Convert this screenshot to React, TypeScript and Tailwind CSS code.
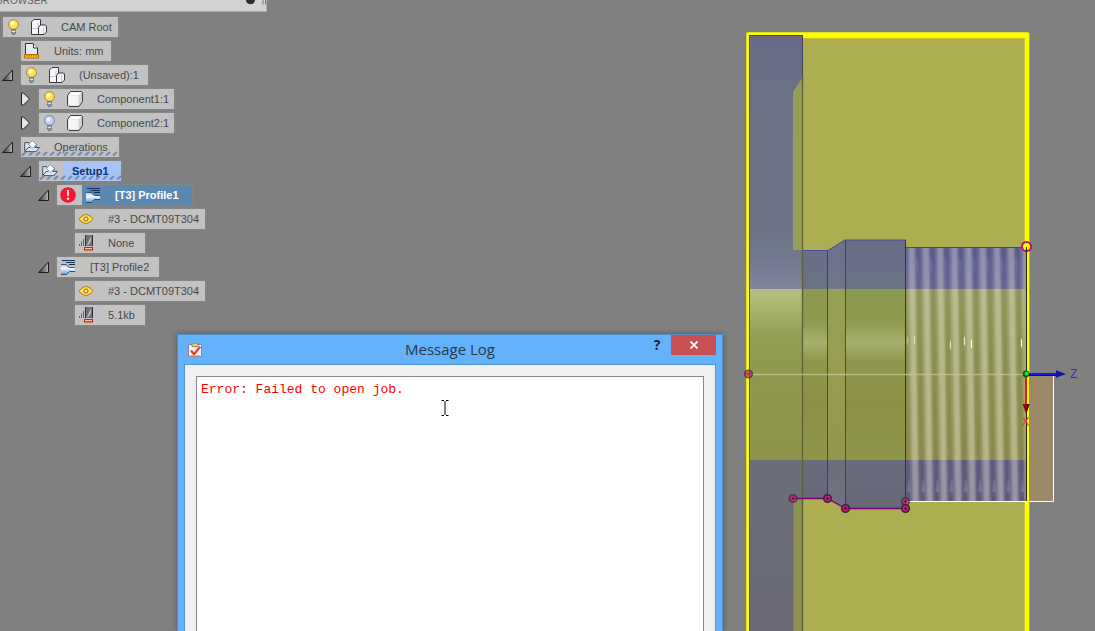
import { ReactNode } from "react";

function Bulb({ on = true }: { on?: boolean }) {
  return (
    <svg viewBox="0 0 16 16" className="w-4 h-4 shrink-0">
      <circle
        cx="7.500"
        cy="5.500"
        r="4.900"
        fill={on ? "#ffe24a" : "#bcd0fa"}
        stroke={on ? "#a8842c" : "#74839f"}
      />
      <circle cx="6.500" cy="4.500" r="2.200" fill={on ? "#fffbc4" : "#edf4ff"} />
      <path d="M5.500 10.500h4v3.500l-1 1.500h-2l-1-1.500z" fill="#8f98b0" stroke="#5a6276" strokeWidth="0.800" />
      <path d="M5.500 12.300h4" stroke="#e6e9f2" />
    </svg>
  );
}

function Assembly() {
  return (
    <svg viewBox="0 0 16 16" className="w-4 h-4 shrink-0">
      <path d="M.5 3 3 .5h6.500V6L8 15.500H.5z" fill="#f4f6f8" stroke="#33383f" strokeLinejoin="round" />
      <path d="M1 3.500h5.500L9 1" fill="none" stroke="#fff" />
      <path d="M7 3.500V9M1 9.500h6" fill="none" stroke="#c4c9cf" />
      <path d="M7.500 8.500 9.500 6h5l1 1v6l-2.500 2.500H7.500z" fill="#f4f6f8" stroke="#33383f" strokeLinejoin="round" />
      <path d="M12.500 15V9L15 6.500" fill="none" stroke="#c4c9cf" />
    </svg>
  );
}

function Cube() {
  return (
    <svg viewBox="0 0 16 16" className="w-4 h-4 shrink-0">
      <path
        d="M.5 4.500 3.500.5h11l1 1v9l-3.500 5h-10L.5 14z"
        fill="#cfd2d6"
        stroke="#3c4148"
        strokeLinejoin="round"
      />
      <path d="M1.200 5h10.300v9.800H2.200l-1-1z" fill="#f3f4f6" />
      <path d="M1.600 4.400 3.800 1.200h10.400l-2.700 3.200z" fill="#fff" />
    </svg>
  );
}

function Units() {
  return (
    <svg viewBox="0 0 16 16" className="w-4 h-4 shrink-0">
      <path d="M1.500 11.500V.5H9l4.500 4.500v6.500" fill="#e9edf4" stroke="#22304a" />
      <path d="M9.500.8V5H13.500" fill="#fff" stroke="#22304a" />
      <path d="M.5 11.500h14v3.500H.5z" fill="#ffc52e" stroke="#b36b00" />
      <path d="M3 12v1.600M5.300 12v1.600M7.600 12v1.600M9.900 12v1.600M12.200 12v1.600" stroke="#8c5200" strokeWidth="0.800" />
    </svg>
  );
}

function Folder() {
  return (
    <svg viewBox="0 0 16 16" className="w-4 h-4 shrink-0">
      <path d="M.7 12.400V3.600h3.800l1 1.600h6.500v7.200" fill="#dfe4ea" stroke="#4a525e" />
      <path d="m8.200 1.400 4.200 4-3.800 4-4.200-4z" fill="#fff" stroke="#6f94c0" />
      <path d="M.8 12.600 4.200 8.500h11.200l-3.600 4.100z" fill="#dde4ec" stroke="#4a525e" strokeLinejoin="round" />
      <path d="m5.500 8 3 2.400 2.700-2.400z" fill="#a9cdf0" />
    </svg>
  );
}

function ErrorMark() {
  return (
    <svg viewBox="0 0 16 16" className="w-4 h-4 shrink-0">
      <circle cx="8" cy="8" r="7.800" fill="#fb1330" />
      <path d="M6.900 3h2.200l-.4 6.200H7.300z" fill="#fff" />
      <circle cx="8" cy="11.800" r="1.200" fill="#fff" />
    </svg>
  );
}

function ProfileIcon() {
  return (
    <svg viewBox="0 0 16 16" className="w-4 h-4 shrink-0">
      <defs>
        <linearGradient id="turned" x1="0" y1="0" x2="0" y2="1">
          <stop offset="0" stopColor="#a9d3fa" />
          <stop offset="0.400" stopColor="#f2f9ff" />
          <stop offset="1" stopColor="#4f9be0" />
        </linearGradient>
      </defs>
      <path d="M2 1.500h13M6 3.500h9M9 5.500h6" stroke="#13305c" />
      <path d="M1 5.500h5l3.500 3H15v4H9.500l-3 3H1z" fill="url(#turned)" />
      <path d="M15 8.500H9.500L6 5.500H1M15 12.500H9.500l-3 3H1" fill="none" stroke="#24374f" strokeWidth="0.800" />
    </svg>
  );
}

function Insert() {
  return (
    <svg viewBox="0 0 16 16" className="w-4 h-4 shrink-0">
      <path
        d="M.7 8 4 5l3.200-1.600h1.600L12 5l3.300 3L12 11l-3.200 1.600H7.200L4 11z"
        fill="#ffdc4a"
        stroke="#b07c12"
        strokeLinejoin="round"
      />
      <circle cx="8" cy="8" r="2" fill="#fff2a6" stroke="#8c6414" />
    </svg>
  );
}

function Stats() {
  return (
    <svg viewBox="0 0 16 16" className="w-4 h-4 shrink-0">
      <path d="M1.500 11V9M3.500 11V6.500M5.500 11V4" stroke="#5d6268" />
      <path d="M7 0h8v11H7z" fill="#6c7278" />
      <path d="M7.500 0v11M14.500 0v11" stroke="#2c3136" />
      <path d="M9.500 8.500 13 1.500V6l-3.500 5z" fill="#b9c0c6" />
      <path d="M6 12h9v3.500H6z" fill="#c0260e" />
      <path d="M7 13.700h7" stroke="#fff0c8" />
    </svg>
  );
}

function Toggle({ open, label }: { open: boolean; label: string }) {
  return (
    <button type="button" aria-label={label} className="w-[18px] h-5 shrink-0">
      <svg viewBox="0 0 18 20" className="w-[18px] h-5 overflow-visible">
        <defs>
          <linearGradient id="corner" x1="0" y1="0" x2="1" y2="0">
            <stop offset="0.200" stopColor="#4a4a4a" />
            <stop offset="1" stopColor="#b4b4b4" />
          </linearGradient>
        </defs>
        {open ? (
          <path d="M-.5 15.500 9.500 5v10.500z" fill="url(#corner)" stroke="#1c1c1c" strokeLinejoin="round" />
        ) : (
          <path d="M.5 4h2L8.500 10l-6 6h-2z" fill="#e4e4e4" stroke="#1c1c1c" strokeLinejoin="round" />
        )}
      </svg>
    </button>
  );
}

// diagonal ticks drawn under the rows that still need regenerating
function Hatch() {
  return (
    <svg className="absolute left-0 bottom-px w-full h-[5px]">
      <defs>
        <pattern id="hatch" width="7" height="5" patternUnits="userSpaceOnUse">
          <path d="m1 4.500 4-3.500" stroke="#7289b4" strokeWidth="2" />
        </pattern>
      </defs>
      <rect width="100%" height="5" fill="url(#hatch)" />
    </svg>
  );
}

type Row = {
  label: string;
  indent: string;
  width: string;
  icons: ReactNode[];
  open?: boolean;
  state?: "setup" | "active";
  hatch?: boolean;
};

const rows: Row[] = [
  { label: "CAM Root", indent: "pl-[3px]", width: "w-[115px]", icons: [<Bulb />, <Assembly />] },
  { label: "Units: mm", indent: "pl-[21px]", width: "w-[90px]", icons: [<Units />] },
  { label: "(Unsaved):1", indent: "pl-[3px]", width: "w-[127px]", icons: [<Bulb />, <Assembly />], open: true },
  { label: "Component1:1", indent: "pl-[21px]", width: "w-[135px]", icons: [<Bulb />, <Cube />], open: false },
  { label: "Component2:1", indent: "pl-[21px]", width: "w-[135px]", icons: [<Bulb on={false} />, <Cube />], open: false },
  { label: "Operations", indent: "pl-[3px]", width: "w-[98px]", icons: [<Folder />], open: true, hatch: true },
  { label: "Setup1", indent: "pl-[21px]", width: "w-[82px]", icons: [<Folder />], open: true, state: "setup", hatch: true },
  { label: "[T3] Profile1", indent: "pl-[39px]", width: "w-[135px]", icons: [<ErrorMark />, <ProfileIcon />], open: true, state: "active" },
  { label: "#3 - DCMT09T304", indent: "pl-[75px]", width: "w-[130px]", icons: [<Insert />] },
  { label: "None", indent: "pl-[75px]", width: "w-[70px]", icons: [<Stats />] },
  { label: "[T3] Profile2", indent: "pl-[39px]", width: "w-[102px]", icons: [<ProfileIcon />], open: true },
  { label: "#3 - DCMT09T304", indent: "pl-[75px]", width: "w-[130px]", icons: [<Insert />] },
  { label: "5.1kb", indent: "pl-[75px]", width: "w-[70px]", icons: [<Stats />] },
];

const fills = {
  plain: "bg-[#c2c2c2] text-[#484848]",
  setup: "bg-[linear-gradient(to_right,#c2c2c2_24px,#a6c5f4_24px)] text-[#0a2f7c] font-bold",
  active: "bg-[linear-gradient(to_right,#c2c2c2_25px,#5b88b0_25px)] text-white font-bold",
};

function TreeRow({ label, indent, width, icons, open, state, hatch }: Row) {
  return (
    <li className={`flex h-5 ${indent}`}>
      {open !== undefined && <Toggle open={open} label={`Toggle ${label}`} />}
      <div
        className={`relative flex items-center h-5 pl-[3px] shadow-[0_0_3px_#8f8f8f] ${width} ${fills[state ?? "plain"]}`}
      >
        <div className="flex gap-[9px] mr-3.5">
          {icons.map((icon, i) => (
            <span key={i}>{icon}</span>
          ))}
        </div>
        <span className="whitespace-nowrap">{label}</span>
        {hatch && <Hatch />}
      </div>
    </li>
  );
}

function Browser() {
  return (
    <aside className="w-[267px] shrink-0 text-[11px] leading-4">
      <header className="flex items-end justify-between h-3 overflow-hidden bg-[#d2d2d2] border-b border-r border-[#aaa] text-[#5f6266]">
        <h2 className="-ml-1 mb-0.5 text-[10px] leading-4">BROWSER</h2>
        <svg viewBox="0 0 20 11" className="w-5 h-[11px]">
          <circle cx="4.500" cy="-.3" r="4.600" fill="#2e2e2e" />
          <path d="M17 0v4.500M19.500 0v4.500" stroke="#777" />
        </svg>
      </header>
      <ul className="flex flex-col gap-1 pt-[5px]">
        {rows.map((row, i) => (
          <TreeRow key={i} {...row} />
        ))}
      </ul>
    </aside>
  );
}

const points = [
  { x: 748.5, y: 374, faded: true },
  { x: 793, y: 498.5, faded: true },
  { x: 827.5, y: 498.5 },
  { x: 845.5, y: 508.5 },
  { x: 905.5, y: 501.5, faded: true },
  { x: 905.5, y: 508.5 },
];

const glints = [
  { x: 907.5, y: 341, opacity: 0.35 },
  { x: 914.5, y: 340, opacity: 0.5 },
  { x: 950.5, y: 345, opacity: 0.7 },
  { x: 964.5, y: 341, opacity: 0.8 },
  { x: 971.5, y: 344, opacity: 1 },
  { x: 1021.5, y: 343, opacity: 1 },
];

function Viewport() {
  return (
    <svg viewBox="740 0 355 631" className="w-[355px] h-[631px] shrink-0" role="img" aria-label="Turned part">
      <defs>
        <linearGradient id="disk" gradientUnits="userSpaceOnUse" x1="0" y1="35" x2="0" y2="631">
          <stop offset="0" stopColor="#696b86" />
          <stop offset="0.100" stopColor="#6b7285" />
          <stop offset="0.330" stopColor="#6b7384" />
          <stop offset="0.380" stopColor="#727990" />
          <stop offset="0.426" stopColor="#8284a0" />
          <stop offset="0.426" stopColor="#b6bf80" />
          <stop offset="0.455" stopColor="#acb671" />
          <stop offset="0.500" stopColor="#939f55" />
          <stop offset="0.570" stopColor="#8f994d" />
          <stop offset="0.713" stopColor="#8f944a" />
          <stop offset="0.713" stopColor="#6c6e7a" />
          <stop offset="1" stopColor="#6a6b76" />
        </linearGradient>
        <linearGradient id="shaft" gradientUnits="userSpaceOnUse" x1="0" y1="240" x2="0" y2="509">
          <stop offset="0" stopColor="#6a6d88" />
          <stop offset="0.182" stopColor="#697483" />
          <stop offset="0.182" stopColor="#8c9a4e" />
          <stop offset="0.310" stopColor="#8f9b50" />
          <stop offset="0.380" stopColor="#a7b06e" />
          <stop offset="0.450" stopColor="#8f984d" />
          <stop offset="0.600" stopColor="#8c9045" />
          <stop offset="0.818" stopColor="#8e9648" />
          <stop offset="0.818" stopColor="#6a6b7b" />
          <stop offset="1" stopColor="#666878" />
        </linearGradient>
        <linearGradient id="cone" gradientUnits="userSpaceOnUse" x1="0" y1="240" x2="0" y2="509">
          <stop offset="0" stopColor="#6e7089" />
          <stop offset="0.182" stopColor="#707789" />
          <stop offset="0.182" stopColor="#96a156" />
          <stop offset="0.500" stopColor="#989c50" />
          <stop offset="0.818" stopColor="#92974b" />
          <stop offset="0.818" stopColor="#6d6d7b" />
          <stop offset="1" stopColor="#727280" />
        </linearGradient>
        <linearGradient id="thread" gradientUnits="userSpaceOnUse" x1="0" y1="247" x2="0" y2="501">
          <stop offset="0" stopColor="#5a5a82" />
          <stop offset="0.165" stopColor="#66668c" />
          <stop offset="0.165" stopColor="#858b57" />
          <stop offset="0.500" stopColor="#7f824c" />
          <stop offset="0.838" stopColor="#807c46" />
          <stop offset="0.838" stopColor="#5e5975" />
          <stop offset="1" stopColor="#5d5873" />
        </linearGradient>
        <linearGradient
          id="ridges"
          gradientUnits="userSpaceOnUse"
          x1="904.600"
          y1="247"
          x2="918.800"
          y2="247"
          spreadMethod="repeat"
          gradientTransform="rotate(-0.900 905 247)"
        >
          <stop offset="0" stopColor="#fffff0" stopOpacity="0" />
          <stop offset="0.200" stopColor="#fffff0" stopOpacity="0.160" />
          <stop offset="0.340" stopColor="#fffff0" stopOpacity="0.360" />
          <stop offset="0.500" stopColor="#fffff0" stopOpacity="0.440" />
          <stop offset="0.660" stopColor="#fffff0" stopOpacity="0.360" />
          <stop offset="0.800" stopColor="#fffff0" stopOpacity="0.080" />
          <stop offset="1" stopColor="#fffff0" stopOpacity="0" />
        </linearGradient>
        <pattern id="runoutTop" x="906" y="247" width="14.200" height="42" patternUnits="userSpaceOnUse">
          <path d="m8 13 3-2 2 5-1.500 10z" fill="#9a9ac6" opacity="0.150" />
        </pattern>
        <pattern id="runoutBottom" x="906" y="460" width="14.200" height="41" patternUnits="userSpaceOnUse">
          <path d="m1 31 2-14 2 14-2 2z" fill="#a09cc0" opacity="0.350" />
        </pattern>
      </defs>

      {/* stock */}
      <path d="M746 631V34q0-2 2-2h279q2.500 0 2.500 2v597z" fill="#dede20" />
      <path d="M747 631V33h282v598z" fill="#ff0" />
      <path d="M803 38h221v593H803z" fill="#adad52" />
      <path d="M802 38.500h222M1024.500 38v593" stroke="#c6c632" fill="none" />

      {/* flange */}
      <path d="M749 35h54v596h-54z" fill="url(#disk)" />
      <path d="m793 92 10-15v173h-10z" fill="#95a055" />
      <path d="M793 498h10v133h-10z" fill="#8a944c" />
      <path d="M749.500 35v596" stroke="#55583f" />
      <path d="M749 35.500h54M802.500 35v43" stroke="#414264" fill="none" />

      {/* shaft */}
      <path d="M803 250h25v248h-25zM845 240h61v268h-61z" fill="url(#shaft)" />
      <path d="m828 250 17-10v268l-17-10z" fill="url(#cone)" />
      <path d="M802.500 78v553" stroke="#5f6238" strokeWidth="1.400" />
      <path d="M827.500 250v248M845.500 240v268" stroke="#3a3a30" opacity="0.800" />
      <path d="M803 250.500h25l17-10.500h61" fill="none" stroke="#4a4ba0" />

      {/* thread */}
      <path d="M906 247h120v254H906z" fill="url(#thread)" />
      <path d="M906 247h120v254H906z" fill="url(#ridges)" />
      <path d="M906 289h120v171H906z" fill="#c8c860" opacity="0.120" />
      <path d="M906 247h120v42H906z" fill="#5050a0" opacity="0.180" />
      <path d="M906 460h120v41H906z" fill="#5050a0" opacity="0.100" />
      <path d="M906 247h120v42H906z" fill="url(#runoutTop)" />
      <path d="M906 460h120v41H906z" fill="url(#runoutBottom)" />
      {glints.map(({ x, y, opacity }) => (
        <ellipse key={x} cx={x} cy={y} rx="0.700" ry="4.500" fill="#ffffd8" opacity={opacity} />
      ))}
      <path d="M906 247.500h120" stroke="#4344a6" />
      <path d="M905.500 240v268" stroke="#36362c" />

      <path d="M749 374.500h277" stroke="#c9c99a" strokeWidth="1.500" opacity="0.700" />

      {/* machining area */}
      <path d="M1029 375h24v126h-24z" fill="#9c8967" />
      <path d="M1024 247h2v254h-2z" fill="#a0a060" opacity="0.400" />
      <path d="M908 501.500h145.500V375" fill="none" stroke="#fff" />
      <path d="M1026.500 247v254" stroke="#222" />

      <path d="M793 498.500V631" stroke="#8c5c7c" />
      <path d="M793 498.500h34.500l18 10h60" fill="none" stroke="#780078" strokeWidth="1.300" />
      {points.map(({ x, y, faded }) => (
        <g key={`${x}-${y}`} opacity={faded ? 0.7 : 1}>
          <circle cx={x} cy={y} r="3.800" fill="#c8187e" stroke="#3c2438" strokeWidth="1.600" />
          <circle cx={x} cy={y} r="1.200" fill="#3a0a28" />
        </g>
      ))}
      <circle cx="1026.500" cy="246.500" r="4.500" fill="#ff0" stroke="#c01070" strokeWidth="2" />
      <path d="M1026.500 247v5" stroke="#222" />

      {/* axes */}
      <path d="M1026 374v31" stroke="#f01414" strokeWidth="2" />
      <path d="M1022.500 404h7l-3.500 9.500z" fill="#8c0c0c" />
      <path d="M1027 404h2.500l-2.500 8z" fill="#3a0808" />
      <path d="M1028 374h29" stroke="#1616e0" strokeWidth="2" />
      <path d="M1028 375.500h29" stroke="#0c0c60" />
      <path d="M1056 370.300v7.400l10-3.700z" fill="#14149c" />
      <circle cx="1026" cy="374" r="3.400" fill="#0c5c1c" />
      <circle cx="1026.600" cy="373.400" r="2" fill="#20e020" />
      <text x="1070" y="378" fill="#2828e0" className="font-['Open_Sans',sans-serif] text-[13px]">
        Z
      </text>
      <text x="1022" y="426" fill="#f04020" className="font-['Open_Sans',sans-serif] text-[13px]">
        X
      </text>
    </svg>
  );
}

function MessageLog() {
  return (
    <section
      role="dialog"
      aria-labelledby="log-title"
      className="absolute left-[177px] top-[334px] bottom-0 w-[546px] flex flex-col bg-[#64b2fc] border border-b-0 border-[#4d8fcc] shadow-[0_0_6px_#555]"
    >
      <div className="grid grid-cols-[1fr_auto_1fr] h-[29px] shrink-0">
        <svg viewBox="0 0 14 14" className="w-3.5 h-3.5 mt-2 ml-2.5">
          <path d="M.5 1.500h13v12H.5z" fill="#f4f1f6" stroke="#8d7f98" />
          <path d="M4 .2h6v3.400H4z" fill="#e0cf7a" stroke="#85753a" strokeWidth="0.800" />
          <path d="m3 7.500 3 3.800 6.200-7.500" fill="none" stroke="#dc4426" strokeWidth="2.200" />
          <path d="M2 12.700h10" stroke="#b8b0c4" />
        </svg>
        <h1
          id="log-title"
          className="font-['Open_Sans',sans-serif] text-[15px] leading-7 text-[#27384b]"
        >
          Message Log
        </h1>
        <div className="flex justify-end items-start mr-1.5">
          <button type="button" aria-label="Help" className="w-7 h-5 font-['Open_Sans',sans-serif] text-[14px] leading-5 font-bold text-[#222]">
            ?
          </button>
          <button type="button" aria-label="Close" className="flex items-center justify-center w-[45px] h-5 bg-[#c75050]">
            <svg viewBox="0 0 8 8" className="w-2 h-2">
              <path d="m.5.5 7 7m0-7-7 7" stroke="#fff" strokeWidth="1.700" />
            </svg>
          </button>
        </div>
      </div>
      <div className="flex flex-1 mx-1.5 pt-[11px] px-[11px] bg-[#f0f0f0] border border-b-0 border-[#4f97da]">
        <textarea
          readOnly
          aria-label="Messages"
          defaultValue="Error: Failed to open job."
          className="flex-1 resize-none outline-none bg-white border border-b-0 border-[#828790] px-1 pt-[5px] font-['Liberation_Mono',monospace] text-[13px] leading-4 text-[#f00]"
        />
      </div>
      <svg viewBox="0 0 8 16" className="absolute left-[263px] top-[65px] w-2 h-4">
        <path d="M.5.500h2.500M5 .5h2.500M.5 15.500h2.500M5 15.500h2.500M4 1v14" stroke="#000" fill="none" />
      </svg>
    </section>
  );
}

export default function App() {
  return (
    <main className="relative flex justify-between min-h-screen overflow-hidden bg-[#808080] font-['Liberation_Sans',Arial,sans-serif]">
      <Browser />
      <Viewport />
      <MessageLog />
    </main>
  );
}
